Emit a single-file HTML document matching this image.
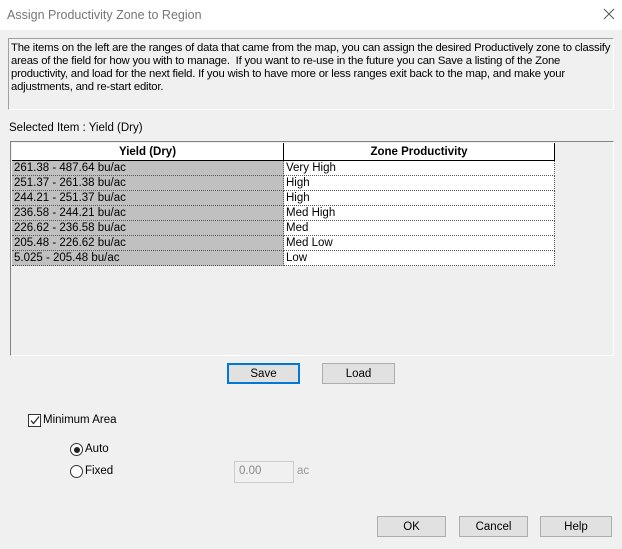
<!DOCTYPE html>
<html><head><style>
*{box-sizing:border-box;margin:0;padding:0}
body{width:622px;height:549px;background:#f0f0f0;font-family:"Liberation Sans",sans-serif;font-size:11.5px;color:#000;position:relative;overflow:hidden}
.abs{position:absolute}
.title{left:0;top:0;width:622px;height:30px;background:#fff}
.title span{position:absolute;left:7px;top:8px;font-size:12.5px;color:#777}
.desc{left:8px;top:38px;width:606px;height:72px;border:1px solid #a0a0a0;border-right-color:#fff;border-bottom-color:#fff;padding:3px 2px;line-height:13px;font-size:11.3px;letter-spacing:-0.2px;white-space:nowrap;overflow:hidden}
.grid{left:10px;top:141px;width:604px;height:215px;background:#efefef;border:1px solid #828282;border-right-color:#fff;border-bottom-color:#fff}
.hdr{position:absolute;top:1px;height:18px;background:#fff;border-right:1px solid #000;border-bottom:1px solid #000;font-weight:bold;text-align:center;line-height:18px}
.row{position:absolute;height:15px;line-height:14px;border-bottom:1px dotted #555;padding-left:2px}
.c1{left:1px;width:272px;background:#c0c0c0;border-right:1px dotted #555}
.c2{left:273px;width:271px;background:#fff;border-right:1px dotted #555}
.btn{position:absolute;height:21px;background:#e1e1e1;border:1px solid #adadad;text-align:center;line-height:20px}
</style></head><body>
<div class="abs title"><span>Assign Productivity Zone to Region</span>
<svg class="abs" style="left:603px;top:8px" width="12" height="12"><path d="M1 1L11 11M11 1L1 11" stroke="#555" stroke-width="1"/></svg></div>
<div class="abs desc">The items on the left are the ranges of data that came from the map, you can assign the desired Productively zone to classify<br>areas of the field for how you with to manage.&nbsp; If you want to re-use in the future you can Save a listing of the Zone<br>productivity, and load for the next field. If you wish to have more or less ranges exit back to the map, and make your<br>adjustments, and re-start editor.</div>
<div class="abs" style="left:9px;top:122px">Selected Item : Yield (Dry)</div>
<div class="abs grid">
<div class="hdr" style="left:1px;width:272px">Yield (Dry)</div>
<div class="hdr" style="left:273px;width:271px">Zone Productivity</div>
<div class="row c1" style="top:19px">261.38 - 487.64 bu/ac</div><div class="row c2" style="top:19px">Very High</div>
<div class="row c1" style="top:34px">251.37 - 261.38 bu/ac</div><div class="row c2" style="top:34px">High</div>
<div class="row c1" style="top:49px">244.21 - 251.37 bu/ac</div><div class="row c2" style="top:49px">High</div>
<div class="row c1" style="top:64px">236.58 - 244.21 bu/ac</div><div class="row c2" style="top:64px">Med High</div>
<div class="row c1" style="top:79px">226.62 - 236.58 bu/ac</div><div class="row c2" style="top:79px">Med</div>
<div class="row c1" style="top:94px">205.48 - 226.62 bu/ac</div><div class="row c2" style="top:94px">Med Low</div>
<div class="row c1" style="top:109px">5.025 - 205.48 bu/ac</div><div class="row c2" style="top:109px">Low</div>
</div>
<div class="btn" style="left:227px;top:363px;width:73px;border:2px solid #0078d7;line-height:18px">Save</div>
<div class="btn" style="left:322px;top:363px;width:73px">Load</div>
<div class="abs" style="left:28px;top:414px;width:13px;height:13px;border:1px solid #333;background:#fff"><svg width="11" height="11" style="position:absolute;left:0;top:0"><path d="M2 5.5L4.5 8.5L10 1.5" stroke="#222" fill="none" stroke-width="1.2"/></svg></div>
<div class="abs" style="left:43px;top:414px">Minimum Area</div>
<div class="abs" style="left:70px;top:443px;width:13px;height:13px;border:1px solid #333;border-radius:50%;background:#fff"><div style="position:absolute;left:2.5px;top:2.5px;width:6px;height:6px;border-radius:50%;background:#222"></div></div>
<div class="abs" style="left:85px;top:443px">Auto</div>
<div class="abs" style="left:70px;top:465px;width:13px;height:13px;border:1px solid #333;border-radius:50%;background:#fff"></div>
<div class="abs" style="left:85px;top:465px">Fixed</div>
<div class="abs" style="left:234px;top:461px;width:60px;height:22px;border:1px solid #ccc;background:#f0f0f0;color:#888;padding:3px 4px">0.00</div>
<div class="abs" style="left:297px;top:465px;color:#999">ac</div>
<div class="btn" style="left:377px;top:516px;width:69px">OK</div>
<div class="btn" style="left:459px;top:516px;width:69px">Cancel</div>
<div class="btn" style="left:540px;top:516px;width:72px">Help</div>
</body></html>
